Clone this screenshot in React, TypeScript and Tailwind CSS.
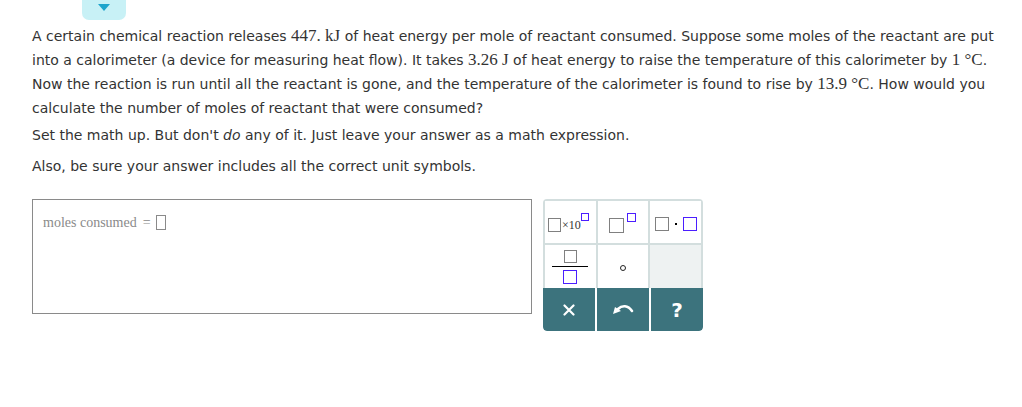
import React from 'react';

const M: React.FC<{ children: React.ReactNode }> = ({ children }) => (
  <span className="font-['Liberation_Serif',serif] text-[17px]">{children}</span>
);

const Box: React.FC<{ cls: string }> = ({ cls }) => <span className={`inline-block border ${cls}`} />;

const App: React.FC = () => {
  return (
    <div className="w-[1022px] h-[407px] bg-white relative font-['DejaVu_Sans',Verdana,sans-serif] text-[14px] text-[#333]">
      <div className="absolute left-[82px] top-0 w-[44px] h-[20px] bg-[#c8f1f6] rounded-b-[7px] flex justify-center pt-[4px]">
        <svg width="12" height="7" viewBox="0 0 12 7">
          <path d="M0 0 L12 0 L6 7 Z" fill="#1ea5cc" />
        </svg>
      </div>

      <div className="pl-[32px] pt-[24px]">
        <p className="leading-[24px] whitespace-nowrap">
          A certain chemical reaction releases <M>447. kJ</M> of heat energy per mole of reactant consumed. Suppose some moles of the reactant are put
          <br />
          into a calorimeter (a device for measuring heat flow). It takes <M>3.26 J</M> of heat energy to raise the temperature of this calorimeter by <M>1 °C</M>.
          <br />
          Now the reaction is run until all the reactant is gone, and the temperature of the calorimeter is found to rise by <M>13.9 °C</M>. How would you
          <br />
          calculate the number of moles of reactant that were consumed?
        </p>
        <p className="mt-[3px] leading-[24px]">
          Set the math up. But don't <i>do</i> any of it. Just leave your answer as a math expression.
        </p>
        <p className="mt-[7px] leading-[24px]">Also, be sure your answer includes all the correct unit symbols.</p>

        <div className="mt-[21px] flex items-start gap-[11px]">
          <div className="w-[500px] h-[115px] border border-[#8a8a8a] pl-[10px] pt-[12px]">
            <div className="flex items-center font-['Liberation_Serif',serif] text-[14px] text-[#8a8a8a]">
              <span>moles consumed</span>
              <span className="ml-[6px]">=</span>
              <span className="ml-[5px] inline-block w-[10px] h-[15px] border border-[#8a8a8a]" />
            </div>
          </div>

          <div className="w-[160px] rounded-[4px] overflow-hidden bg-white">
            <div className="grid grid-cols-3 gap-[2px] bg-[#d3dede] p-[2px] pb-0">
              <div className="h-[42px] bg-white flex items-center pl-[3px]">
                <Box cls="w-[13px] h-[14px] mt-[6px] border-[#808080]" />
                <span className="font-['Liberation_Serif',serif] text-[12px] text-[#333] mt-[6px] ml-[1px]">×10</span>
                <Box cls="w-[8px] h-[8px] -mt-[10px] border-[#4b1eff]" />
              </div>
              <div className="h-[42px] bg-white flex items-center justify-center">
                <Box cls="w-[15px] h-[15px] mt-[6px] border-[#808080]" />
                <Box cls="w-[9px] h-[9px] -mt-[10px] ml-[3px] border-[#4b1eff]" />
              </div>
              <div className="h-[42px] bg-white flex items-center justify-center gap-[6px]">
                <Box cls="w-[14px] h-[14px] mt-[4px] border-[#808080]" />
                <span className="inline-block w-[2px] h-[2px] bg-black mt-[4px]" />
                <Box cls="w-[14px] h-[14px] mt-[4px] border-[#4b1eff]" />
              </div>

              <div className="h-[43px] bg-white flex flex-col items-center justify-center">
                <Box cls="w-[13px] h-[13px] border-[#808080]" />
                <span className="block w-[36px] h-[1px] bg-black my-[3px]" />
                <Box cls="w-[14px] h-[14px] border-[#4b1eff]" />
              </div>
              <div className="h-[43px] bg-white flex items-center justify-center">
                <span className="inline-block w-[6px] h-[6px] rounded-full border border-[#222] mt-[2px]" />
              </div>
              <div className="h-[43px] bg-[#eef2f2]" />
            </div>

            <div className="grid grid-cols-3 gap-[2px]">
              <div className="h-[43px] bg-[#3c737d] rounded-bl-[4px] flex items-center justify-center">
                <svg width="12" height="12" viewBox="0 0 12 12">
                  <path d="M1.5 1.5 L10.5 10.5 M10.5 1.5 L1.5 10.5" stroke="white" strokeWidth="2.2" strokeLinecap="round" />
                </svg>
              </div>
              <div className="h-[43px] bg-[#3c737d] flex items-center justify-center">
                <svg width="22" height="12" viewBox="0 0 22 12">
                  <path d="M6 5 C10 1 16 1 20 7" stroke="white" strokeWidth="2.6" fill="none" strokeLinecap="round" />
                  <path d="M1 10 L3 3 L9 7 Z" fill="white" />
                </svg>
              </div>
              <div className="h-[43px] bg-[#3c737d] rounded-br-[4px] flex items-center justify-center text-white text-[20px] font-semibold">
                ?
              </div>
            </div>
          </div>
        </div>
      </div>
    </div>
  );
};

export default App;
